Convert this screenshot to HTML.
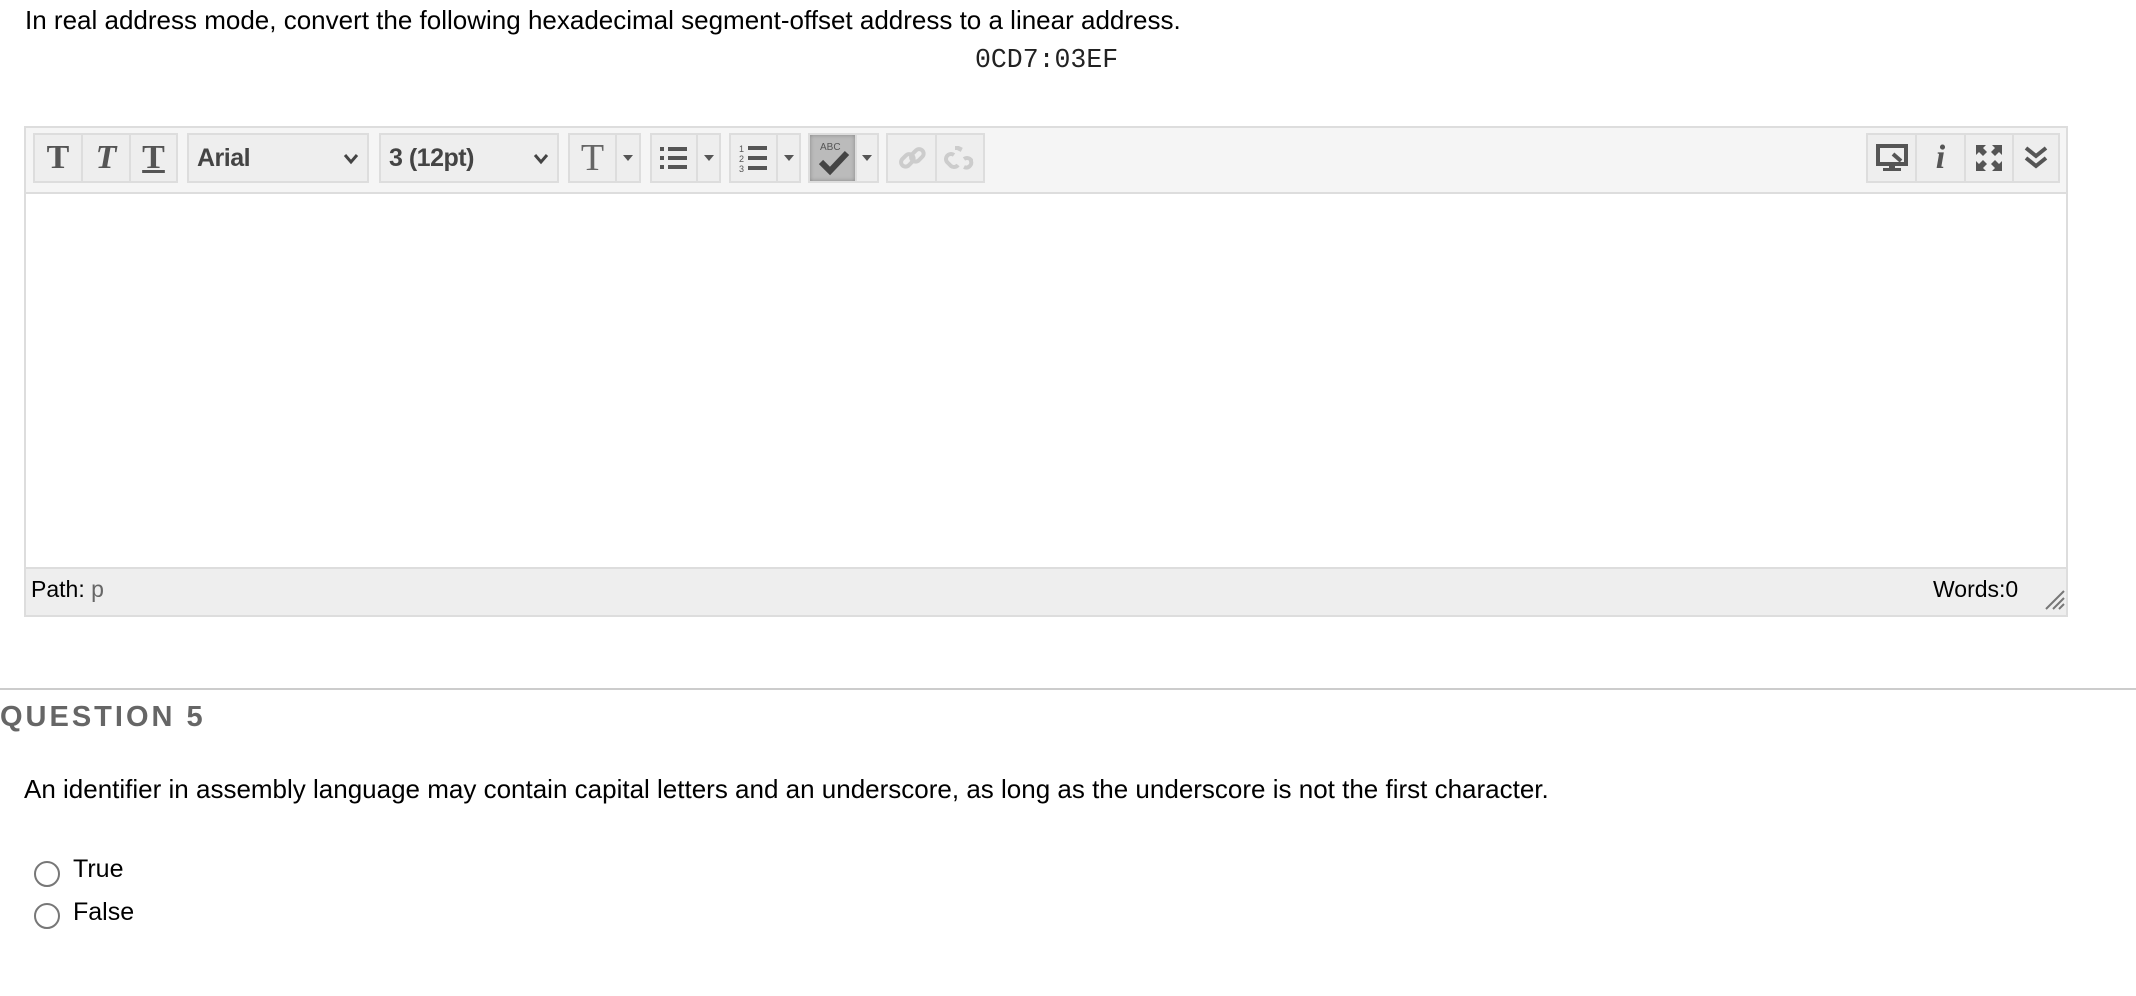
<!DOCTYPE html>
<html><head><meta charset="utf-8"><style>
*{margin:0;padding:0;box-sizing:border-box}
body{width:2136px;height:996px;background:#fff;font-family:"Liberation Sans",Arial,sans-serif;color:#000;position:relative;overflow:hidden}
.a{position:absolute;white-space:nowrap}
.ed{position:absolute;left:24px;top:126px;width:2044px;height:491px;border:2px solid #ddd;background:#fff}
.tb{position:absolute;left:0;top:0;right:0;height:66px;background:#f5f5f5;border-bottom:2px solid #ddd}
.sb{position:absolute;left:0;bottom:0;right:0;height:48px;background:#eee;border-top:2px solid #ddd}
.g{position:absolute;top:5px;height:50px;border:2px solid #ddd;background:#eee;display:flex}
.g>div{border-right:2px solid #ddd;height:100%;display:flex;align-items:center;justify-content:center;position:relative}
.g>div:last-child{border-right:none}
.sel{position:absolute;top:5px;height:50px;border:2px solid #ddd;background:#eee;font-weight:bold;font-size:25px;color:#444;padding-left:8px;line-height:46px;letter-spacing:-0.5px}
.sel svg{position:absolute;right:8px;top:18px}
.T{font-family:"Liberation Serif",serif;font-weight:bold;font-size:34px;color:#555}
.dd{width:0;height:0;border-left:5px solid transparent;border-right:5px solid transparent;border-top:6px solid #555}
.rad{position:absolute;width:26px;height:26px;border:2px solid #777;border-radius:50%;background:#fff}
</style></head><body>
<div class="a" style="left:25px;top:5px;font-size:26px">In real address mode, convert the following hexadecimal segment-offset address to a linear address.</div>
<div class="a" style="left:975px;top:45px;font-family:'Liberation Mono',monospace;font-size:26.5px;color:#222">0CD7:03EF</div>

<div class="ed">
 <div class="tb">
  <div class="g" style="left:7px;width:145px">
   <div style="width:48px"><span class="T" style="font-size:34px">T</span></div>
   <div style="width:48px"><span class="T" style="font-style:italic">T</span></div>
   <div style="width:45px"><span class="T" style="text-decoration:underline;text-decoration-thickness:3px">T</span></div>
  </div>
  <div class="sel" style="left:161px;width:182px">Arial<svg width="16" height="12"><path d="M2 2l6 7 6-7" stroke="#444" stroke-width="3" fill="none"/></svg></div>
  <div class="sel" style="left:353px;width:180px">3 (12pt)<svg width="16" height="12"><path d="M2 2l6 7 6-7" stroke="#444" stroke-width="3" fill="none"/></svg></div>
  <div class="g" style="left:542px;width:73px">
   <div style="width:47px"><span class="T" style="font-weight:normal;color:#666;font-size:38px">T</span></div>
   <div style="width:22px"><span class="dd"></span></div>
  </div>
  <div class="g" style="left:624px;width:71px">
   <div style="width:46px"><svg width="30" height="26"><g fill="#555"><rect x="1" y="2" width="4" height="4"/><rect x="1" y="11" width="4" height="4"/><rect x="1" y="20" width="4" height="4"/><rect x="9" y="2" width="19" height="4"/><rect x="9" y="11" width="19" height="4"/><rect x="9" y="20" width="19" height="4"/></g></svg></div>
   <div style="width:21px"><span class="dd"></span></div>
  </div>
  <div class="g" style="left:703px;width:72px">
   <div style="width:47px"><svg width="30" height="30"><g fill="#555"><text x="0" y="9" font-size="9" font-family="Liberation Sans">1</text><text x="0" y="19" font-size="9" font-family="Liberation Sans">2</text><text x="0" y="29" font-size="9" font-family="Liberation Sans">3</text><rect x="9" y="3" width="19" height="4"/><rect x="9" y="13" width="19" height="4"/><rect x="9" y="23" width="19" height="4"/></g></svg></div>
   <div style="width:21px"><span class="dd"></span></div>
  </div>
  <div class="g" style="left:782px;width:71px">
   <div style="width:47px;background:#bbb;box-shadow:inset 0 0 4px #888"><svg width="36" height="40"><text x="5" y="12" font-size="10" fill="#555" font-family="Liberation Sans">ABC</text><path d="M6 24l9 9 17-18" stroke="#444" stroke-width="6" fill="none"/></svg></div>
   <div style="width:20px"><span class="dd"></span></div>
  </div>
  <div class="g" style="left:860px;width:99px">
   <div style="width:49px"><svg width="30" height="30"><g stroke="#ccc" stroke-width="4" fill="none"><rect x="3" y="13" width="14" height="9" rx="4.5" transform="rotate(-45 10 17)"/><rect x="13" y="8" width="14" height="9" rx="4.5" transform="rotate(-45 20 12)"/></g></svg></div>
   <div style="width:46px"><svg width="32" height="30"><g stroke="#ccc" stroke-width="4" fill="none"><path d="M10 12a5 5 0 0 0-6 8l3 3a5 5 0 0 0 7-1"/><path d="M20 16a5 5 0 0 1 7 1l0 1a5 5 0 0 1-7 6"/><path d="M13 3v4M17 4l-2 4"/></g></svg></div>
  </div>
  <div class="g" style="left:1840px;width:194px">
   <div style="width:49px"><svg width="34" height="30"><rect x="3" y="3" width="28" height="18" fill="none" stroke="#555" stroke-width="4"/><path d="M18 11l8 7" stroke="#555" stroke-width="4"/><rect x="14" y="21" width="6" height="4" fill="#555"/><rect x="8" y="25" width="18" height="3" fill="#555"/></svg></div>
   <div style="width:49px"><span style="font-family:'Liberation Serif',serif;font-style:italic;font-weight:bold;font-size:34px;color:#555">i</span></div>
   <div style="width:48px"><svg width="30" height="30"><g fill="#555"><path d="M2 2h10l-3 3 4 4-4 4-4-4-3 3z"/><path d="M28 2v10l-3-3-4 4-4-4 4-4-3-3z"/><path d="M2 28v-10l3 3 4-4 4 4-4 4 3 3z"/><path d="M28 28h-10l3-3-4-4 4-4 4 4 3-3z"/></g></svg></div>
   <div style="width:44px"><svg width="30" height="30"><path d="M5 5l10 8 10-8M5 15l10 8 10-8" stroke="#555" stroke-width="4" fill="none"/></svg></div>
  </div>
 </div>
 <div class="sb">
  <div class="a" style="left:5px;top:7px;font-size:23px">Path: <span style="color:#666">p</span></div>
  <div class="a" style="left:1907px;top:7px;font-size:23px">Words:0</div>
  <svg class="a" style="left:2018px;top:20px" width="22" height="22"><path d="M2 20L20 2M9 20L20 9M15 20l5-5" stroke="#777" stroke-width="2"/></svg>
 </div>
</div>

<div class="a" style="left:0;top:688px;width:2136px;height:2px;background:#ccc"></div>
<div class="a" style="left:0;top:701px;font-size:29px;font-weight:bold;color:#666;letter-spacing:3px">QUESTION 5</div>
<div class="a" style="left:24px;top:774px;font-size:26px">An identifier in assembly language may contain capital letters and an underscore, as long as the underscore is not the first character.</div>
<div class="rad" style="left:34px;top:861px"></div>
<div class="a" style="left:73px;top:855px;font-size:25px">True</div>
<div class="rad" style="left:34px;top:903px"></div>
<div class="a" style="left:73px;top:898px;font-size:25px">False</div>
</body></html>
